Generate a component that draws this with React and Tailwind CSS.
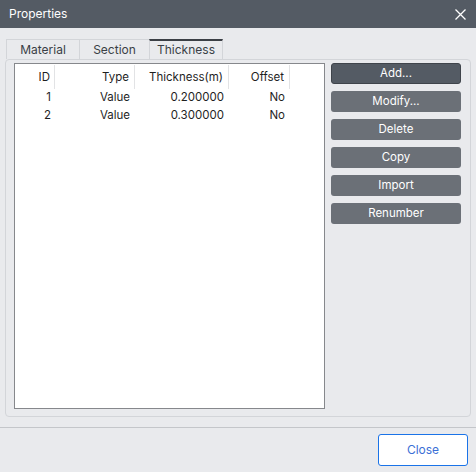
const tabs = ['Material', 'Section', 'Thickness']
const buttons = ['Add...', 'Modify...', 'Delete', 'Copy', 'Import', 'Renumber']
const rows = [
  { id: 1, type: 'Value', thickness: '0.200000', offset: 'No' },
  { id: 2, type: 'Value', thickness: '0.300000', offset: 'No' },
]

export default function App() {
  return (
    <div
      className="w-[476px] h-[472px] bg-[#e9eaed] flex flex-col text-[11.5px] text-[#1f1f1f]"
      style={{ fontFamily: 'Inter, "Noto Sans", sans-serif' }}
    >
      {/* Title bar */}
      <div className="h-[28px] bg-[#545b64] flex items-center justify-between pl-[9px] pr-[10px] text-white">
        <span className="text-[12px]">Properties</span>
        <svg width="11" height="11" viewBox="0 0 11 11" stroke="white" strokeWidth="1.3" fill="none">
          <path d="M0.5 0.5 L10.5 10.5 M10.5 0.5 L0.5 10.5" />
        </svg>
      </div>

      {/* Tabs */}
      <div className="flex pl-[6px] mt-[11px] h-[20px]">
        {tabs.map((t, i) => (
          <div
            key={t}
            className={`w-[70px] first:w-[73px] flex items-center justify-center border-l border-[#d3d5d9] text-[12px] text-[#3a3f46] ${
              i === 2
                ? 'border-t-2 border-t-[#3b3f45] border-r w-[74px]'
                : 'border-t border-t-[#d3d5d9]'
            }`}
          >
            {t}
          </div>
        ))}
      </div>

      {/* Panel */}
      <div className="mx-[5px] h-[358px] border border-[#d3d5d9] rounded-[4px] flex gap-[6px] pl-[8px] pt-[3px] pr-[9px] pb-[7px]">
        <div className="w-[311px] h-[346px] bg-white border border-[#86888c]">
          <div className="flex h-[25px] items-center">
            <div className="w-[40px] text-right pr-[4px] h-[24px] leading-[24px] border-r border-[#e2e3e5]">ID</div>
            <div className="w-[80px] text-right pr-[5px] h-[24px] leading-[24px] border-r border-[#e2e3e5]">Type</div>
            <div className="w-[94px] text-right pr-[5px] h-[24px] leading-[24px] border-r border-[#e2e3e5]">Thickness(m)</div>
            <div className="w-[61px] text-right pr-[5px] h-[24px] leading-[24px] border-r border-[#e2e3e5]">Offset</div>
          </div>
          {rows.map((r) => (
            <div key={r.id} className="flex h-[18px] items-center">
              <div className="w-[40px] text-right pr-[4px]">{r.id}</div>
              <div className="w-[80px] text-right pr-[5px]">{r.type}</div>
              <div className="w-[94px] text-right pr-[5px]">{r.thickness}</div>
              <div className="w-[61px] text-right pr-[5px]">{r.offset}</div>
            </div>
          ))}
        </div>
        <div className="flex flex-col gap-[7px]">
          {buttons.map((b, i) => (
            <div
              key={b}
              className={`w-[130px] h-[21px] rounded-[3px] flex items-center justify-center text-white ${
                i === 0 ? 'bg-[#545b64] border border-[#3f444b]' : 'bg-[#6b7077]'
              }`}
            >
              {b}
            </div>
          ))}
        </div>
      </div>

      {/* Footer */}
      <div className="mt-[10px] border-t border-[#c4c6ca] flex justify-end pt-[6px] pr-[8px]">
        <div className="w-[90px] h-[32px] border border-[#1a73e8] rounded-[3px] bg-white flex items-center justify-center text-[#3b6fd6] text-[12px]">
          Close
        </div>
      </div>
    </div>
  )
}
